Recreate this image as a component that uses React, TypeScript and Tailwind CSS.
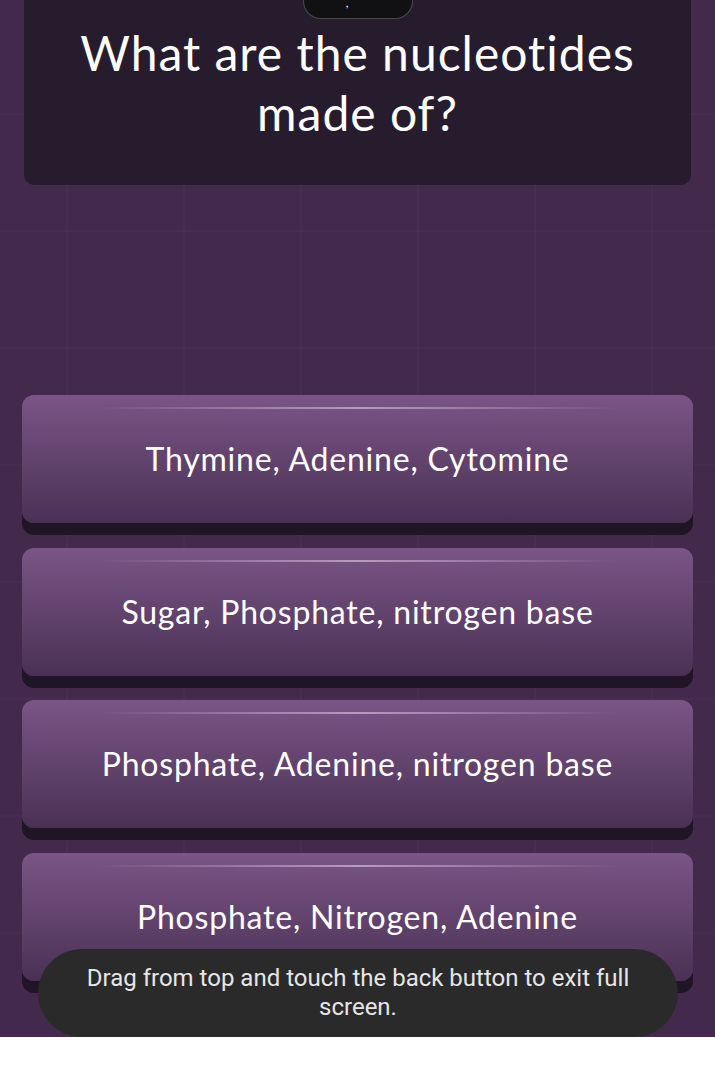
const options = [
  'Thymine, Adenine, Cytomine',
  'Sugar, Phosphate, nitrogen base',
  'Phosphate, Adenine, nitrogen base',
  'Phosphate, Nitrogen, Adenine',
]

function OptionButton({ label }: { label: string }) {
  return (
    <div className="flex h-[128px] flex-col items-center rounded-[12px] bg-[linear-gradient(to_bottom,#7a5586,#4a3154)] pt-[12px] shadow-[0_12px_0_#1f1524]">
      <div className="h-[2px] w-[520px] bg-[linear-gradient(to_right,transparent,#b69cbf,transparent)]" />
      <div className="flex flex-1 items-center pb-[14px] font-['Lato',sans-serif] text-[32px] tracking-[0.8px] text-white">
        {label}
      </div>
    </div>
  )
}

export default function App() {
  return (
    <div className="flex h-[1084px] w-[715px] flex-col bg-white">
      <div className="relative h-[1037px] overflow-hidden bg-[#432a4c] bg-[linear-gradient(to_right,rgba(255,255,255,0.02)_2px,transparent_2px),linear-gradient(to_bottom,rgba(255,255,255,0.015)_2px,transparent_2px)] bg-[size:117px_117px] bg-[position:66px_113px]">
        <div className="relative mx-[24px] h-[185px] rounded-b-[10px] bg-[#261c2d] pt-[23px]">
          <div className="absolute left-[279px] top-0 flex h-[19px] w-[110px] justify-center rounded-b-[18px] border-x border-b border-[#4a4a4a] bg-[#111012] pr-[22px]">
            <span className="font-['Lato',sans-serif] text-[12px] leading-[6px] text-white">,</span>
          </div>
          <p className="text-center font-['Lato',sans-serif] text-[48px] leading-[60px] tracking-[1px] text-white">
            What are the nucleotides
            <br />
            made of?
          </p>
        </div>

        <div className="mx-[22px] mt-[210px] flex flex-col gap-[24.5px]">
          {options.map((option) => (
            <OptionButton key={option} label={option} />
          ))}
        </div>

        <div className="absolute bottom-0 left-[38px] flex h-[88px] w-[640px] items-center justify-center rounded-[44px] bg-[#2a2a2b] px-10 text-center font-['Roboto',sans-serif] text-[24px] leading-[29px] text-[#e6e6e6]">
          Drag from top and touch the back button to exit full screen.
        </div>
      </div>
    </div>
  )
}
